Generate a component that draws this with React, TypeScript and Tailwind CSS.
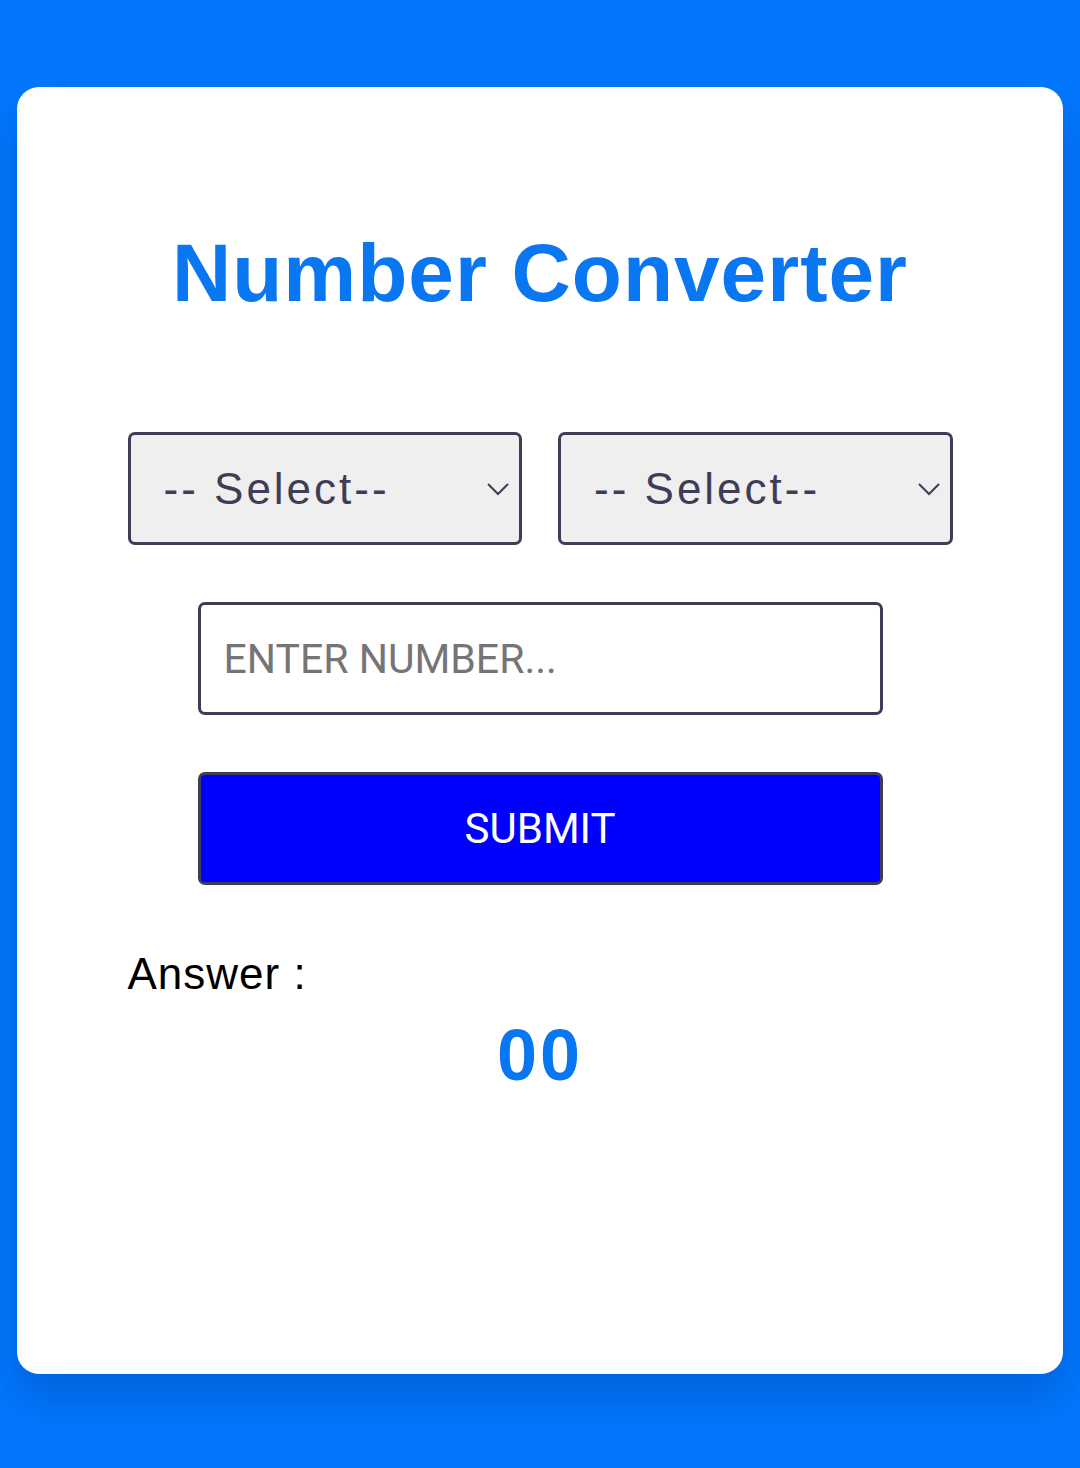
import React from "react";

const SANS = { fontFamily: '"Liberation Sans", Arial, sans-serif' };
const ROBOTO = { fontFamily: 'Roboto, "Liberation Sans", sans-serif' };

function Chevron() {
  return (
    <svg width={24} height={14} viewBox="0 0 24 14" fill="none" stroke="#3f3d56" strokeWidth={2}>
      <path d="M2 2l10 10L22 2" />
    </svg>
  );
}

function Select() {
  return (
    <div className="relative flex-1">
      <select
        className="h-[113px] w-full appearance-none rounded-[7px] border-[3px] border-[#3f3d56] bg-[#efefef] pl-[33px] text-[44px] tracking-[3px] text-[#3f3d56] outline-none"
        style={SANS}
        defaultValue=""
      >
        <option value="">-- Select--</option>
        <option value="bin">Binary</option>
        <option value="dec">Decimal</option>
        <option value="hex">Hexadecimal</option>
      </select>
      <span className="pointer-events-none absolute right-[12px] top-1/2 -translate-y-1/2">
        <Chevron />
      </span>
    </div>
  );
}

export default function App() {
  return (
    <div className="min-h-[1468px] bg-[#0277fd] px-[17px] pt-[87px]">
      <div className="flex h-[1287px] flex-col items-center rounded-[22px] bg-white pt-[145px] shadow-[0_24px_40px_rgba(0,40,120,0.25)]">
        <h1 className="text-[82px] font-bold leading-none tracking-[1px] text-[#0a77f2]" style={SANS}>
          Number Converter
        </h1>

        <div className="mt-[118px] flex w-[825px] gap-[36px]">
          <Select />
          <Select />
        </div>

        <input
          type="text"
          placeholder="ENTER NUMBER..."
          className="mt-[57px] h-[113px] w-[685px] rounded-[7px] border-[3px] border-[#3f3d56] bg-white px-[23px] text-[41px] text-[#333] outline-none placeholder:text-[#757575]"
          style={ROBOTO}
        />

        <button
          className="mt-[57px] h-[113px] w-[685px] rounded-[7px] border-[3px] border-[#3f3d56] bg-[#0000ff] text-[42px] text-white"
          style={ROBOTO}
        >
          SUBMIT
        </button>

        <div className="mt-[67px] w-[825px]" style={SANS}>
          <p className="text-[44px] leading-none tracking-[1px] text-black">Answer :</p>
          <p className="mt-[23px] text-center text-[72px] font-bold leading-none tracking-[3px] text-[#0a77f2]">00</p>
        </div>
      </div>
    </div>
  );
}
